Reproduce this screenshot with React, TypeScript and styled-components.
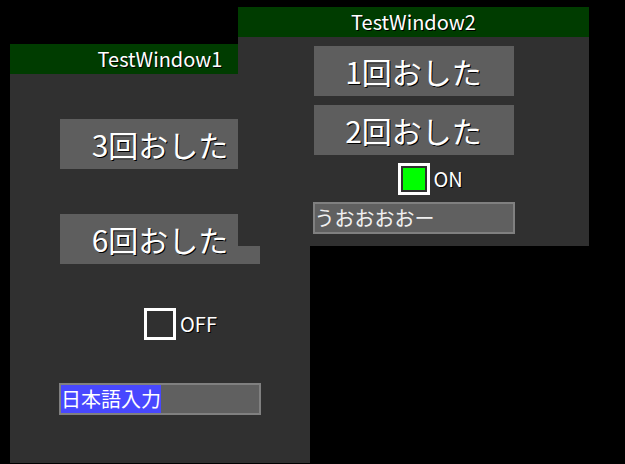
import React from "react";
import styled, { createGlobalStyle } from "styled-components";

const Global = createGlobalStyle`
  html, body { margin: 0; padding: 0; background: #000; }
  body { font-family: "Noto Sans CJK JP", "Noto Sans", sans-serif; }
`;

const Desktop = styled.div`
  position: relative;
  width: 625px;
  height: 464px;
  background: #000;
  overflow: hidden;
`;

const WindowFrame = styled.div<{ $x: number; $y: number; $w: number; $h: number; $z: number }>`
  position: absolute;
  left: ${(p) => p.$x}px;
  top: ${(p) => p.$y}px;
  width: ${(p) => p.$w}px;
  height: ${(p) => p.$h}px;
  z-index: ${(p) => p.$z};
  display: flex;
  flex-direction: column;
  background: #303030;
`;

const TitleBar = styled.div`
  height: 30px;
  flex: none;
  background: #003c00;
  color: #fff;
  font-size: 20px;
  line-height: 30px;
  text-align: center;
  text-shadow: 1px 1px 0 #000;
`;

const Body = styled.div<{ $pad: number }>`
  display: flex;
  flex-direction: column;
  align-items: center;
  padding-top: ${(p) => p.$pad}px;
`;

const Button = styled.div`
  width: 200px;
  height: 50px;
  flex: none;
  background: #5e5e5e;
  color: #fff;
  font-size: 30px;
  line-height: 50px;
  text-align: center;
  text-shadow: 1px 1px 0 #000;
  white-space: nowrap;
`;

const CheckRow = styled.div`
  width: 100%;
  display: grid;
  grid-template-columns: 1fr 32px 1fr;
  align-items: center;
`;

const CheckBox = styled.div`
  grid-column: 2;
  width: 32px;
  height: 32px;
  box-sizing: border-box;
  border: 3px solid #fff;
  padding: 2px;
  display: flex;
`;

const CheckFill = styled.div`
  flex: 1;
  background: #00ff00;
`;

const CheckLabel = styled.div`
  grid-column: 3;
  padding-left: 4px;
  color: #fff;
  font-size: 20px;
  line-height: 32px;
  text-shadow: 1px 1px 0 #000;
`;

const TextField = styled.div`
  width: 202px;
  height: 32px;
  box-sizing: border-box;
  border: 2px solid #808080;
  background: #606060;
  color: #f0f0f0;
  font-size: 20px;
  line-height: 28px;
  white-space: nowrap;
  overflow: hidden;
  display: flex;
`;

const Selected = styled.span`
  background: #4848ff;
  color: #fff;
`;

const Spacer = styled.div<{ $h: number }>`
  height: ${(p) => p.$h}px;
  flex: none;
`;

export default function App() {
  return (
    <>
      <Global />
      <Desktop>
        <WindowFrame $x={10} $y={44} $w={300} $h={419} $z={1}>
          <TitleBar>TestWindow1</TitleBar>
          <Body $pad={45}>
            <Button>3回おした</Button>
            <Spacer $h={45} />
            <Button>6回おした</Button>
            <Spacer $h={44} />
            <CheckRow>
              <CheckBox />
              <CheckLabel>OFF</CheckLabel>
            </CheckRow>
            <Spacer $h={43} />
            <TextField>
              <Selected>日本語入力</Selected>
            </TextField>
          </Body>
        </WindowFrame>
        <WindowFrame $x={238} $y={7} $w={351} $h={239} $z={2}>
          <TitleBar>TestWindow2</TitleBar>
          <Body $pad={9}>
            <Button>1回おした</Button>
            <Spacer $h={9} />
            <Button>2回おした</Button>
            <Spacer $h={8} />
            <CheckRow>
              <CheckBox>
                <CheckFill />
              </CheckBox>
              <CheckLabel>ON</CheckLabel>
            </CheckRow>
            <Spacer $h={7} />
            <TextField>うおおおおー</TextField>
          </Body>
        </WindowFrame>
      </Desktop>
    </>
  );
}
